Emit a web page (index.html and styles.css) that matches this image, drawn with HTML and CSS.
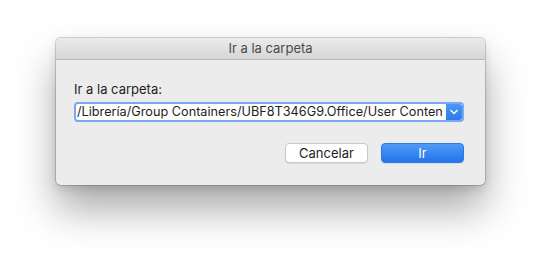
FILE: index.html
```html
<!DOCTYPE html>
<html>
<head>
  <meta charset="utf-8">
  <link rel="stylesheet" href="styles.css">
</head>
<body>
  <div class="window">
    <div class="titlebar">Ir a la carpeta</div>
    <div class="content">
      <label class="field-label" for="folderPath">Ir a la carpeta:</label>
      <div class="combo">
        <span class="combo-text" id="folderPath">/Librería/Group Containers/UBF8T346G9.Office/User Conten</span>
        <span class="combo-arrow">
          <svg width="8" height="6" viewBox="0 0 8 6"><path d="M1 1.5 L4 4.5 L7 1.5" fill="none" stroke="#fff" stroke-width="1.5" stroke-linecap="round" stroke-linejoin="round"/></svg>
        </span>
      </div>
      <div class="actions">
        <button class="btn">Cancelar</button>
        <button class="btn btn-default">Ir</button>
      </div>
    </div>
  </div>
</body>
</html>
```
FILE: styles.css
```css
html {
  background: #ffffff;
}

body {
  margin: 0;
  min-height: 258px;
  padding-top: 38px;
  box-sizing: border-box;
  font-family: "Inter", "Liberation Sans", sans-serif;
  font-size: 13px;
  color: #1e1e1e;
}

.window {
  width: 429px;
  margin-left: 56px;
  background: #ececec;
  border-radius: 5px;
  box-shadow: 0 0 0 1px rgba(0, 0, 0, 0.16), 0 24px 40px rgba(0, 0, 0, 0.34), 0 4px 10px rgba(0, 0, 0, 0.12);
}

.titlebar {
  height: 21px;
  line-height: 21px;
  text-align: center;
  color: #4a4a4a;
  background: linear-gradient(#ebebeb, #d6d6d6);
  border-bottom: 1px solid #b9b9b9;
  border-radius: 5px 5px 0 0;
}

.content {
  padding: 21px 21px 22px 18px;
}

.field-label {
  display: block;
  line-height: 16px;
  margin-bottom: 5px;
}

.combo {
  display: flex;
  height: 20px;
  box-sizing: border-box;
  border: 2px solid #7aa7f2;
  border-radius: 4px;
  background: #fff;
  overflow: hidden;
}

.combo-text {
  flex: 1;
  padding-left: 1px;
  font-size: 12.7px;
  line-height: 16px;
  white-space: nowrap;
  overflow: hidden;
}

.combo-arrow {
  width: 16px;
  display: flex;
  align-items: center;
  justify-content: center;
  background: linear-gradient(#4c98f7, #2a7ce9);
  border-radius: 0 2px 2px 0;
}

.actions {
  display: flex;
  justify-content: flex-end;
  gap: 13px;
  margin-top: 21px;
}

.btn {
  width: 83px;
  height: 20px;
  padding: 0;
  font-family: inherit;
  font-size: 13px;
  color: #1e1e1e;
  background: #fff;
  border: 1px solid #c8c8c8;
  border-radius: 4px;
  box-shadow: 0 1px 1px rgba(0, 0, 0, 0.08);
}

.btn-default {
  color: #fff;
  background: linear-gradient(#4f9bf8, #2373ea);
  border-color: #2d7ae6;
}
```
